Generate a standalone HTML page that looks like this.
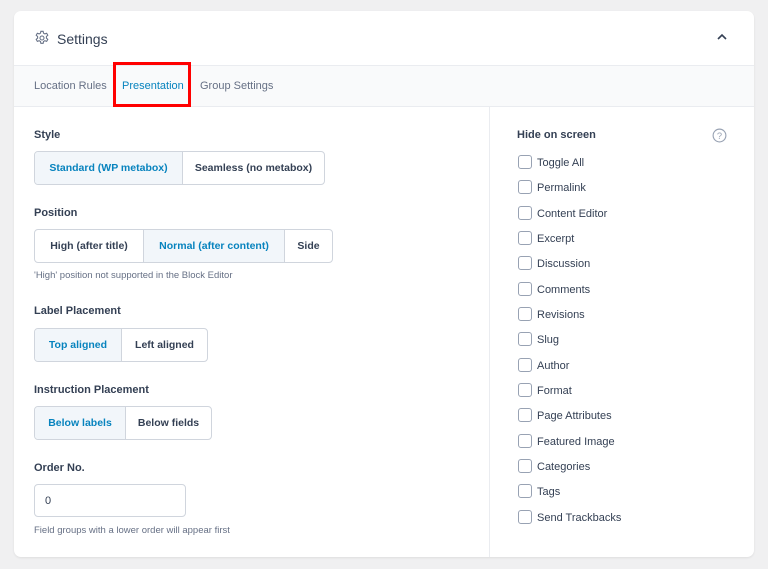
<!DOCTYPE html>
<html><head><style>
*{box-sizing:border-box;margin:0;padding:0}
body{width:768px;height:569px;background:#f0f0f1;font-family:"Liberation Sans",sans-serif;position:relative;overflow:hidden;color:#344054}
.card{position:absolute;left:14px;top:11px;width:740px;height:546px;background:#fff;border-radius:7px;box-shadow:0 1px 2px rgba(0,0,0,.08)}
.a{position:absolute;white-space:nowrap}
.lbl{font-size:11px;font-weight:bold;color:#344054}
.seg{position:absolute;display:flex;height:34px;border:1px solid #d0d5dd;border-radius:4px;overflow:hidden;font-size:10.5px;font-weight:bold;white-space:nowrap}
.seg div{display:flex;align-items:center;justify-content:center;color:#344054;border-left:1px solid #d0d5dd;flex:none}
.seg div:first-child{border-left:0}
.seg .on{background:#f2f6fa;color:#0783be}
.hint{font-size:9.5px;color:#667085}
.cb{position:absolute;left:518px;width:14px;height:14px;border:1px solid #98a2b3;border-radius:3px}
.ct{position:absolute;left:537px;font-size:11px;color:#344054}
</style></head><body>
<div class="card"></div>
<svg class="a" style="left:34px;top:30px" width="16" height="16" viewBox="0 0 24 24" fill="none" stroke="#667085" stroke-width="1.6"><path d="M10.3 2h3.4l.6 2.8 2 1.1 2.7-1 1.7 3-2.1 1.9v2.4l2.1 1.9-1.7 3-2.7-1-2 1.1-.6 2.8h-3.4l-.6-2.8-2-1.1-2.7 1-1.7-3 2.1-1.9v-2.4L3.3 7.9l1.7-3 2.7 1 2-1.1z"/><circle cx="12" cy="12" r="3"/></svg>
<div class="a" style="left:57px;top:31px;font-size:14px;color:#344054">Settings</div>
<svg class="a" style="left:716px;top:32px" width="12" height="10" viewBox="0 0 12 10"><path d="M2 7l4-4 4 4" fill="none" stroke="#344054" stroke-width="1.6"/></svg>
<div class="a" style="left:14px;top:65px;width:740px;height:42px;background:#f9fafb;border-top:1px solid #eaecf0;border-bottom:1px solid #eaecf0"></div>
<div class="a" style="left:34px;top:80px;font-size:11px;color:#667085">Location Rules</div>
<div class="a" style="left:122px;top:80px;font-size:11px;color:#0783be">Presentation</div>
<div class="a" style="left:113px;top:62px;width:78px;height:45px;border:3px solid #f00"></div>
<div class="a" style="left:200px;top:80px;font-size:11px;color:#667085">Group Settings</div>
<div class="a" style="left:489px;top:107px;width:1px;height:450px;background:#eaecf0"></div>

<div class="a lbl" style="left:34px;top:129px">Style</div>
<div class="seg" style="left:34px;top:151px;width:291px"><div class="on" style="width:147px">Standard (WP metabox)</div><div style="width:142px">Seamless (no metabox)</div></div>
<div class="a lbl" style="left:34px;top:207px">Position</div>
<div class="seg" style="left:34px;top:229px;width:299px"><div style="width:108px">High (after title)</div><div class="on" style="width:141px">Normal (after content)</div><div style="width:48px">Side</div></div>
<div class="a hint" style="left:34px;top:270px">'High' position not supported in the Block Editor</div>
<div class="a lbl" style="left:34px;top:305px">Label Placement</div>
<div class="seg" style="left:34px;top:328px;width:174px"><div class="on" style="width:86px">Top aligned</div><div style="width:86px">Left aligned</div></div>
<div class="a lbl" style="left:34px;top:384px">Instruction Placement</div>
<div class="seg" style="left:34px;top:406px;width:178px"><div class="on" style="width:90px">Below labels</div><div style="width:86px">Below fields</div></div>
<div class="a lbl" style="left:34px;top:462px">Order No.</div>
<div class="a" style="left:34px;top:484px;width:152px;height:33px;border:1px solid #d0d5dd;border-radius:4px;font-size:11px;padding:10px 0 0 10px">0</div>
<div class="a hint" style="left:34px;top:525px">Field groups with a lower order will appear first</div>

<div class="a lbl" style="left:517px;top:129px">Hide on screen</div>
<svg class="a" style="left:712px;top:128px" width="15" height="15" viewBox="0 0 16 16"><circle cx="8" cy="8" r="6.8" fill="none" stroke="#98a2b3" stroke-width="1.2"/><text x="8" y="11.5" font-size="10" text-anchor="middle" fill="#98a2b3" font-family="Liberation Sans">?</text></svg>
<div class="cb" style="top:155px"></div><div class="ct" style="top:157px">Toggle All</div>
<div class="cb" style="top:180px"></div><div class="ct" style="top:182px">Permalink</div>
<div class="cb" style="top:206px"></div><div class="ct" style="top:208px">Content Editor</div>
<div class="cb" style="top:231px"></div><div class="ct" style="top:233px">Excerpt</div>
<div class="cb" style="top:256px"></div><div class="ct" style="top:258px">Discussion</div>
<div class="cb" style="top:282px"></div><div class="ct" style="top:284px">Comments</div>
<div class="cb" style="top:307px"></div><div class="ct" style="top:309px">Revisions</div>
<div class="cb" style="top:332px"></div><div class="ct" style="top:334px">Slug</div>
<div class="cb" style="top:358px"></div><div class="ct" style="top:360px">Author</div>
<div class="cb" style="top:383px"></div><div class="ct" style="top:385px">Format</div>
<div class="cb" style="top:408px"></div><div class="ct" style="top:410px">Page Attributes</div>
<div class="cb" style="top:434px"></div><div class="ct" style="top:436px">Featured Image</div>
<div class="cb" style="top:459px"></div><div class="ct" style="top:461px">Categories</div>
<div class="cb" style="top:484px"></div><div class="ct" style="top:486px">Tags</div>
<div class="cb" style="top:510px"></div><div class="ct" style="top:512px">Send Trackbacks</div>
</body></html>
